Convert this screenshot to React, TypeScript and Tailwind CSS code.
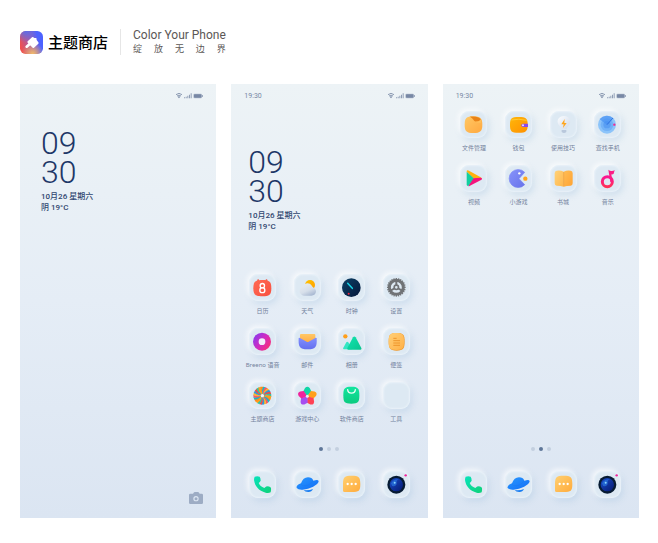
import type { ReactNode } from "react";

const CJK = "font-['Noto_Sans_CJK_SC',sans-serif]";

type AppEntry = { name: string; art: ReactNode };

/* ---------- icon artwork, drawn on an 81 x 81 grid ---------- */

function Gradient({ id, from, to, flat }: { id: string; from: string; to: string; flat?: boolean }) {
  return (
    <linearGradient id={id} x1="0" y1="0" x2={flat ? "0" : "1"} y2="1">
      <stop offset="0" stopColor={from} />
      <stop offset="1" stopColor={to} />
    </linearGradient>
  );
}

const BLOB = "M14 41C14 22 19 16 40 16S67 22 67 41S61 66 40 66S14 60 14 41Z";

const calendar = (
  <>
    <Gradient id="cal" from="#ff6b55" to="#f8503f" />
    <rect x="25" y="16" width="5" height="10" rx="2" fill="#ee5648" />
    <rect x="50" y="16" width="5" height="10" rx="2" fill="#ee5648" />
    <path d="M13 43C13 23 18 18 40 18S67 23 67 43S61 67 40 67S13 63 13 43Z" fill="url(#cal)" />
    <circle cx="40" cy="35" r="6.500" fill="none" stroke="#fff" strokeWidth="4" />
    <circle cx="40" cy="48.500" r="7.500" fill="none" stroke="#fff" strokeWidth="4" />
  </>
);

const weather = (
  <>
    <Gradient id="sun" from="#ffc400" to="#ff9d00" />
    <linearGradient id="cloud" x1="0.100" y1="0" x2="0.700" y2="1">
      <stop offset="0.100" stopColor="#e6ebf1" />
      <stop offset="0.600" stopColor="#d6dfea" />
      <stop offset="1" stopColor="#a9b9d2" />
    </linearGradient>
    <circle cx="48" cy="33" r="15" fill="url(#sun)" />
    <path d="M30 65a14 14 0 0 1-13-15c0-8 5-12 10-14c5-9 19-12 27 0c2 3 3 4 5 5c5 3 7 7 7 11c0 8-6 13-14 13Z" fill="url(#cloud)" />
  </>
);

const clock = (
  <>
    <Gradient id="clk" from="#0d4166" to="#04173a" />
    <circle cx="40" cy="41" r="28" fill="url(#clk)" />
    <path d="M29 28l14 15" stroke="#16d3e4" strokeWidth="4.500" strokeLinecap="round" />
    <circle cx="32" cy="59" r="3" fill="#ef2842" />
  </>
);

const TEETH = Array.from({ length: 24 }, (_, i) => i * 15);
const settings = (
  <>
    {TEETH.map((a) => (
      <rect key={a} x="38" y="12" width="4" height="6" fill="#76797c" transform={`rotate(${a} 40 40)`} />
    ))}
    <circle cx="40" cy="40" r="21" fill="none" stroke="#707376" strokeWidth="9" />
    <circle cx="40" cy="40" r="6.500" fill="none" stroke="#707376" strokeWidth="5" />
    {[0, 120, 240].map((a) => (
      <path key={a} d="M40 33V20" stroke="#707376" strokeWidth="6" transform={`rotate(${a} 40 40)`} />
    ))}
  </>
);

const breeno = (
  <>
    <linearGradient id="bre" x1="0" y1="0.200" x2="1" y2="0.900">
      <stop offset="0" stopColor="#873bf0" />
      <stop offset="0.500" stopColor="#d42bbd" />
      <stop offset="1" stopColor="#ff2f68" />
    </linearGradient>
    <circle cx="39" cy="41" r="27" fill="url(#bre)" />
    <circle cx="39" cy="41" r="10" fill="#f2eefa" />
  </>
);

const mail = (
  <>
    <Gradient id="env" from="#8290ff" to="#636fee" flat />
    <Gradient id="flap" from="#ffc766" to="#ffae45" flat />
    <path d="M14 30C24 28 57 28 68 30C69 55 67 64 41 64S13 55 14 30Z" fill="url(#env)" />
    <path d="M18 21q0-3 3-3h40q3 0 3 3v9L44 41q-3 2-6 0L18 30Z" fill="url(#flap)" />
  </>
);

const album = (
  <>
    <Gradient id="hill" from="#12e5b0" to="#09c58f" />
    <circle cx="22" cy="25" r="6.500" fill="#ff9f1a" />
    <path d="M17 64q-3-1-1-5l9-16q3-4 6 0l12 21Z" fill="#35e6c3" />
    <path d="M30 65q-4-1-2-5l17-32q4-5 8 0l17 32q2 4-2 5Z" fill="url(#hill)" />
  </>
);

const notes = (
  <>
    <Gradient id="note" from="#ffcf77" to="#ffb148" />
    <path d="M17 40C17 20 21 15 41 15S65 20 65 40S62 68 41 68S17 60 17 40Z" fill="#f09a2c" />
    <path d="M17 40C17 20 21 15 40 15S63 20 63 40S60 66 40 66S17 60 17 40Z" fill="url(#note)" />
    <path d="M31 31h10M31 38h20M31 45h20M31 52h20" stroke="#ee962c" strokeWidth="3" />
  </>
);

const RAY_COLORS = ["#ff8a1f", "#16b6c6", "#f4566b", "#ffb52a", "#2f9ad8", "#f04a4a", "#35c3a0", "#ff9d1c"];
const RAYS = Array.from({ length: 24 }, (_, i) => ({ a: i * 15, c: RAY_COLORS[i % 8] }));
const themeStore = (
  <>
    {RAYS.map((r) => (
      <path key={r.a} d="M39 36q-7-9-4-21.500l8-.5q-5 10-2 22Z" fill={r.c} transform={`rotate(${r.a} 40 41)`} />
    ))}
    <circle cx="40" cy="41" r="4.500" fill="#f1f1ef" />
  </>
);

const PETALS = [
  { a: 0, c: "#10d6a6" },
  { a: 72, c: "#ffa01c" },
  { a: 144, c: "#ff4254" },
  { a: 216, c: "#a64df0" },
  { a: 288, c: "#f0249c" },
];
const gameCenter = (
  <>
    {PETALS.map((p) => (
      <path key={p.a} d="M40 43L28 28L33 18q7-8 14 0l5 10Z" fill={p.c} transform={`rotate(${p.a} 40 43)`} />
    ))}
    <circle cx="40" cy="43" r="4.500" fill="#e7edf4" />
  </>
);

const appStore = (
  <>
    <Gradient id="bag" from="#12e59f" to="#0bcb7f" flat />
    <path d="M16 40C16 19 20 14 40 14S64 19 64 40S61 65 40 65S16 61 16 40Z" fill="url(#bag)" />
    <path d="M29 23c1 14 22 14 23 0" fill="none" stroke="#e9fff6" strokeWidth="4" strokeLinecap="round" />
  </>
);

const phone = (
  <>
    <Gradient id="tel" from="#07e3bb" to="#10d178" />
    <path
      d="M17 17q8-2 15 0q3 5 3 12q-2 4-6 7q4 10 17 15q5-5 8-5q7 0 12 4q1 8-1 14q-7 3-15 1C29 60 17 44 15 27q0-6 2-10Z"
      fill="url(#tel)"
    />
  </>
);

const browser = (
  <>
    <Gradient id="pla" from="#2998ff" to="#126df5" />
    <path d="M29 57q14 3 28-3q-4 9-14 9t-14-6Z" fill="#167cf2" />
    <path d="M8 51q-3-8 13-14q6-18 21-18q12 0 16 10q15-5 16 2c0 10-28 25-48 25q-13 1-18-5Z" fill="url(#pla)" />
    <path d="M20 38c3 11 26 8 38-9" fill="none" stroke="#0e63dc" strokeWidth="2" opacity="0.200" />
  </>
);

const messages = (
  <>
    <Gradient id="msg" from="#ffd071" to="#ffab3c" />
    <path d="M15 39C15 18 20 14 41 14S67 18 67 39S63 63 41 63H19q-5 0-4-5Z" fill="url(#msg)" />
    {[29, 41, 53].map((x) => (
      <circle key={x} cx={x} cy="39" r="3.500" fill="#fff" />
    ))}
  </>
);

const camera = (
  <>
    <Gradient id="lens" from="#1b4cc9" to="#061a72" />
    <circle cx="40" cy="41" r="27" fill="#071b33" />
    <circle cx="40" cy="41" r="20" fill="url(#lens)" />
    <path d="M24 37q9-15 24-12q-8 2-7 10t-8 11q-7 1-9-9Z" fill="#2e86ee" opacity="0.550" />
    <circle cx="35" cy="35" r="3" fill="#8bd3ff" />
    <circle cx="68" cy="13" r="3.500" fill="#f0249a" />
  </>
);

const files = (
  <>
    <Gradient id="file" from="#ffc864" to="#ffa840" />
    <path d={BLOB} fill="url(#file)" />
    <path d="M29 17c15-2 27-1 33 8c-3 8-11 9-17 6c-5-3-6-10-16-14Z" fill="#e98318" />
    <path d="M45 31q8 3 17-5l1 9q-10 2-18-4Z" fill="#ffc05a" />
  </>
);

const wallet = (
  <>
    <Gradient id="wal" from="#ffb70a" to="#ff9000" />
    <path d="M15 41C15 22 19 18 41 18S68 22 68 41S64 65 41 65S15 60 15 41Z" fill="url(#wal)" />
    <path d="M19 27q22-5 46 1" fill="none" stroke="#ffca35" strokeWidth="3" />
    <path d="M53 38h16v10H53q-4-1-4-5t4-5Z" fill="#8a48ec" />
    <circle cx="54" cy="43" r="3" fill="#efe2ff" />
  </>
);

const tips = (
  <>
    <Gradient id="bulb" from="#fcfdff" to="#cfdaea" />
    <path d="M34 54q0-5-5-9c-13-13-4-30 13-30s26 17 13 30q-5 4-5 9Z" fill="url(#bulb)" />
    <path d="M35 57h14v6q-7 6-14 0Z" fill="#b9c8dc" />
    <path d="M44 24l-10 16h7l-2 11l11-15h-7Z" fill="#ffa51c" />
  </>
);

const findPhone = (
  <>
    <circle cx="39" cy="41" r="27" fill="#8cc4fa" />
    <circle cx="39" cy="41" r="19" fill="#72b2f7" />
    <circle cx="39" cy="41" r="11" fill="#5a9ff3" />
    <path d="M39 41L17 25A27 27 0 0 1 57 21Z" fill="#438ff3" opacity="0.650" />
    <path d="M39 41L57 21" stroke="#2768d8" strokeWidth="2.500" />
    <circle cx="61" cy="41" r="3.500" fill="#ef2d95" />
  </>
);

const video = (
  <>
    <path d="M20 20q0-6 7-3l34 19q7 4 2 7L39 40Z" fill="#ffb20e" />
    <path d="M37 40l26-2q6 3 0 7L27 64q-2 0-2-1Z" fill="#f4147d" />
    <path d="M20 20L41 40L25 63q-5 1-5-5Z" fill="#12cfa0" />
  </>
);

const miniGames = (
  <>
    <Gradient id="pac" from="#8793fb" to="#6873ea" />
    <path d="M42 41L59 59A27 27 0 1 1 59 22Z" fill="url(#pac)" stroke="url(#pac)" strokeWidth="2" strokeLinejoin="round" />
    <circle cx="43" cy="25" r="3.500" fill="#fff" />
    <circle cx="61" cy="41" r="6.500" fill="#ffa51d" />
  </>
);

const books = (
  <>
    <Gradient id="bookL" from="#ffd27a" to="#ffb74b" />
    <Gradient id="bookR" from="#ffbd56" to="#ffa332" />
    <path d="M41 20q-10-5-21-3q-6 1-6 8v30q0 7 6 7q12 0 21 3Z" fill="url(#bookL)" />
    <path d="M41 20q10-5 21-3q6 1 6 8v30q0 7-6 7q-12 0-21 3Z" fill="url(#bookR)" />
    <path d="M41 21v43" stroke="#ee9a30" strokeWidth="2" />
  </>
);

const music = (
  <>
    <Gradient id="mus" from="#fb1593" to="#ff3158" flat />
    <circle cx="40" cy="50" r="15" fill="none" stroke="url(#mus)" strokeWidth="9" />
    <path d="M49 51L43 14q2 3 8 4q7 1 11-3l-3 11q-3 3-7 2l3 23Z" fill="#fb1c85" />
  </>
);

const HOME_APPS: AppEntry[] = [
  { name: "日历", art: calendar },
  { name: "天气", art: weather },
  { name: "时钟", art: clock },
  { name: "设置", art: settings },
  { name: "Breeno 语音", art: breeno },
  { name: "邮件", art: mail },
  { name: "相册", art: album },
  { name: "便签", art: notes },
  { name: "主题商店", art: themeStore },
  { name: "游戏中心", art: gameCenter },
  { name: "软件商店", art: appStore },
  { name: "工具", art: null },
];

const MORE_APPS: AppEntry[] = [
  { name: "文件管理", art: files },
  { name: "钱包", art: wallet },
  { name: "使用技巧", art: tips },
  { name: "查找手机", art: findPhone },
  { name: "视频", art: video },
  { name: "小游戏", art: miniGames },
  { name: "书城", art: books },
  { name: "音乐", art: music },
];

const DOCK_APPS: AppEntry[] = [
  { name: "电话", art: phone },
  { name: "浏览器", art: browser },
  { name: "信息", art: messages },
  { name: "相机", art: camera },
];

/* ---------- building blocks ---------- */

function Tile({ children }: { children: ReactNode }) {
  return (
    <span className="block size-[27px] rounded-[9px] bg-[#dde9f3] shadow-[-2px_-2px_5px_rgba(255,255,255,0.75),2px_3px_6px_rgba(150,185,220,0.3),inset_0_0_2px_1px_rgba(240,247,252,0.7)]">
      <svg viewBox="0 0 81 81" className="size-full" aria-hidden="true">
        {children}
      </svg>
    </span>
  );
}

function AppGrid({ apps }: { apps: AppEntry[] }) {
  return (
    <div className="grid grid-cols-4 gap-y-[11px] px-[9px]">
      {apps.map((app) => (
        <button key={app.name} type="button" className="flex flex-col items-center gap-1">
          <Tile>{app.art}</Tile>
          <span className="font-['Noto_Sans','Noto_Sans_CJK_SC',sans-serif] text-[6px] leading-3 whitespace-nowrap text-[#72819c]">
            {app.name}
          </span>
        </button>
      ))}
    </div>
  );
}

function Dock() {
  return (
    <div className="grid grid-cols-4 px-[9px] pb-5">
      {DOCK_APPS.map((app) => (
        <button key={app.name} type="button" aria-label={app.name} className="flex justify-center">
          <Tile>{app.art}</Tile>
        </button>
      ))}
    </div>
  );
}

function PageDots({ active }: { active: number }) {
  return (
    <div className="flex justify-center gap-1 pt-[22px] pb-5">
      {[0, 1, 2].map((i) => (
        <span key={i} className={`size-1 rounded-full ${i === active ? "bg-[#5f7699]" : "bg-[#c3cfdf]"}`} />
      ))}
    </div>
  );
}

function StatusBar({ time }: { time?: string }) {
  return (
    <div className="flex h-[18px] items-center justify-between px-[13px] pt-[6px] text-[#7888a5]">
      <span className="font-['Roboto',sans-serif] text-[7px] leading-3">{time}</span>
      <svg viewBox="0 0 84 18" className="h-[6px] w-[28px]" fill="currentColor" aria-hidden="true">
        <path d="M3 5q9-8 18 0" fill="none" stroke="currentColor" strokeWidth="2.500" />
        <path d="M6 9q6-5 12 0" fill="none" stroke="currentColor" strokeWidth="2.500" />
        <path d="M8 11q4-2 8 0l-4 5Z" />
        <path d="M27 13h3v3h-3zM32 11h3v5h-3zM37 8h3v8h-3zM42 5h3v11h-3zM47 1h3v15h-3z" opacity="0.800" />
        <rect x="55" y="2" width="26" height="14" rx="4" opacity="0.500" />
        <rect x="57" y="4" width="22" height="10" rx="2" />
        <rect x="82" y="6" width="2" height="6" />
      </svg>
    </div>
  );
}

function ClockWidget() {
  return (
    <div className="text-[#1d3767]">
      <time dateTime="09:30" className="block font-['Roboto',sans-serif] text-[32px] leading-[29px] font-light">
        <span className="block">09</span>
        <span className="block">30</span>
      </time>
      <div className="mt-1 font-['Roboto','Noto_Sans_CJK_SC',sans-serif] text-[8px] leading-[11px] font-medium text-[#2f466f]">
        <p>10月26 星期六</p>
        <p>阴 19°C</p>
      </div>
    </div>
  );
}

function Screen({ label, children }: { label: string; children: ReactNode }) {
  return (
    <section
      aria-label={label}
      className="flex aspect-[196/433] flex-col bg-linear-to-b from-[#edf3f6] via-[#e5edf6] to-[#dbe5f2]"
    >
      {children}
    </section>
  );
}

function BrandHeader() {
  return (
    <header className="flex items-center">
      <svg viewBox="0 0 69 69" className="size-[23px]" aria-hidden="true">
        <linearGradient id="brand" x1="0" y1="0.600" x2="1" y2="0.300">
          <stop offset="0" stopColor="#f0504f" />
          <stop offset="0.450" stopColor="#a35cae" />
          <stop offset="0.800" stopColor="#4c62ff" />
        </linearGradient>
        <radialGradient id="brandWarm" cx="0.550" cy="1" r="0.500">
          <stop offset="0" stopColor="#f2bd69" />
          <stop offset="1" stopColor="#f2bd69" stopOpacity="0" />
        </radialGradient>
        <radialGradient id="brandCool" cx="0.250" cy="0" r="0.500">
          <stop offset="0" stopColor="#5b6ee8" />
          <stop offset="1" stopColor="#5b6ee8" stopOpacity="0" />
        </radialGradient>
        <rect width="69" height="69" rx="17" fill="url(#brand)" />
        <rect width="69" height="69" rx="17" fill="url(#brandWarm)" />
        <rect width="69" height="69" rx="17" fill="url(#brandCool)" />
        <path d="M30 38L20 47" stroke="#fff" strokeWidth="8" strokeLinecap="round" />
        <path d="M23 31L36 19q2-2 4 0l3 2h6l1 6l5 7q2 2 0 4L42 50q-2 2-4 0L23 35q-2-2 0-4Z" fill="#fff" />
      </svg>
      <h1 className={`ml-[5px] text-[15px] leading-6 font-medium text-black ${CJK}`}>主题商店</h1>
      <div className="ml-3 border-l border-[#e6e6e6] pl-3 text-[#5b5756]">
        <p className="font-['Roboto',sans-serif] text-[12px] leading-[13px]">Color Your Phone</p>
        <p className={`text-[9px] leading-[13px] [text-align-last:justify] ${CJK}`}>绽 放 无 边 界</p>
      </div>
    </header>
  );
}

export default function App() {
  return (
    <main className={`min-h-screen bg-white pt-[29px] pr-[19px] pb-6 pl-5 ${CJK}`}>
      <BrandHeader />
      <div className="mt-[29px] grid grid-cols-3 gap-[15px]">
        <Screen label="锁屏">
          <StatusBar />
          <div className="mt-[27px] pl-[21px]">
            <ClockWidget />
          </div>
          <button type="button" aria-label="相机" className="mt-auto mr-[13px] mb-[14px] self-end">
            <svg viewBox="0 0 42 36" className="h-3 w-[14px]" aria-hidden="true">
              <path
                fillRule="evenodd"
                fill="#9dacc4"
                d="M12 5l3-4q1-1 3-1h8q2 0 3 1l3 4h6q4 0 4 4v23q0 4-4 4H4q-4 0-4-4V9q0-4 4-4ZM21 12a8 8 0 1 0 0 16a8 8 0 1 0 0-16Z"
              />
              <circle cx="21" cy="20" r="4.500" fill="#9dacc4" />
            </svg>
          </button>
        </Screen>

        <Screen label="主屏幕">
          <StatusBar time="19:30" />
          <div className="mt-[46px] pl-[17px]">
            <ClockWidget />
          </div>
          <div className="mt-auto">
            <AppGrid apps={HOME_APPS} />
            <PageDots active={0} />
            <Dock />
          </div>
        </Screen>

        <Screen label="第二屏">
          <StatusBar time="19:30" />
          <div className="mt-[9px]">
            <AppGrid apps={MORE_APPS} />
          </div>
          <div className="mt-auto">
            <PageDots active={1} />
            <Dock />
          </div>
        </Screen>
      </div>
    </main>
  );
}
